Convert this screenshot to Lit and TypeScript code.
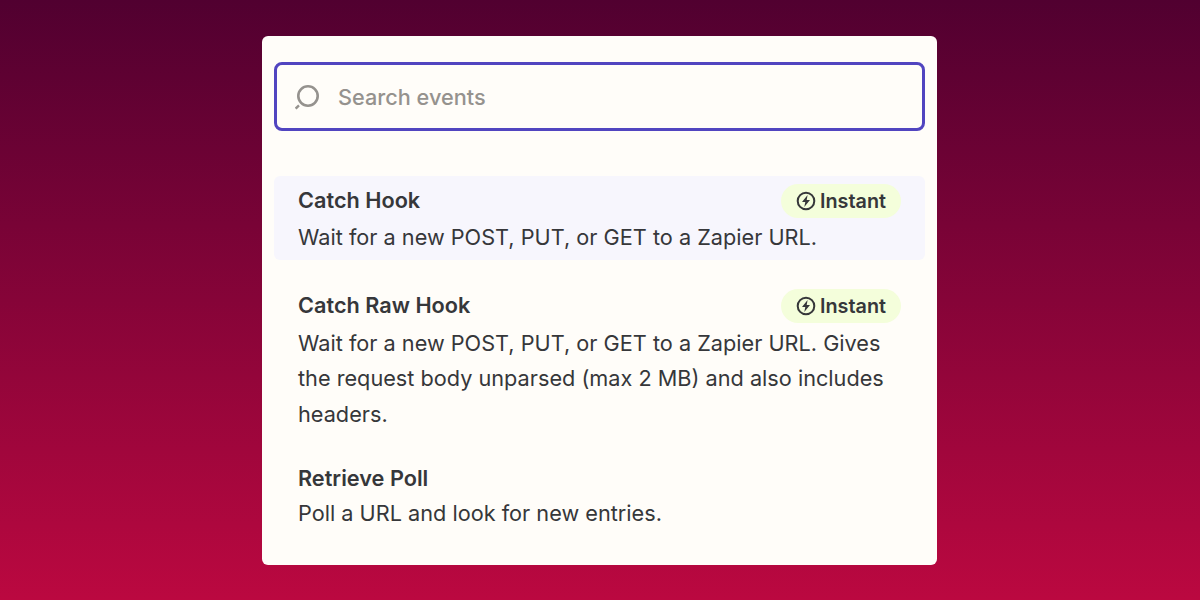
import { LitElement, html, css } from "lit";
import { customElement } from "lit/decorators.js";

const bolt = html`<svg class="bolt" viewBox="0 0 20 20" width="20" height="20" fill="none">
  <circle cx="10" cy="10" r="8.3" stroke="#36373a" stroke-width="2"></circle>
  <path d="M11.6 4 6 11h3.3l-1 5 5.7-7h-3.3z" fill="#36373a"></path>
</svg>`;

const events = [
  { title: "Catch Hook", desc: "Wait for a new POST, PUT, or GET to a Zapier URL.", instant: true, active: true },
  { title: "Catch Raw Hook", desc: "Wait for a new POST, PUT, or GET to a Zapier URL. Gives the request body unparsed (max 2 MB) and also includes headers.", instant: true, active: false },
  { title: "Retrieve Poll", desc: "Poll a URL and look for new entries.", instant: false, active: false },
];

@customElement("app-root")
export class AppRoot extends LitElement {
  static styles = css`
    :host {
      display: flex;
      align-items: flex-start;
      width: 1200px;
      height: 600px;
      box-sizing: border-box;
      padding: 36px 0 0 262px;
      overflow: hidden;
      background: linear-gradient(180deg, #510030 0%, #bb0840 100%);
      font-family: Inter, "Liberation Sans", sans-serif;
      color: #36373a;
    }
    .card {
      width: 675px;
      height: 529px;
      box-sizing: border-box;
      padding: 26px 12px 0;
      background: #fffdf9;
      border-radius: 6px;
    }
    .search {
      display: flex;
      align-items: center;
      gap: 17px;
      height: 69px;
      box-sizing: border-box;
      padding-left: 18px;
      border: 3px solid #5145c0;
      border-radius: 8px;
      font-size: 21.7px;
      font-weight: 500;
      color: #95928e;
    }
    .list {
      display: flex;
      flex-direction: column;
      margin-top: 45px;
    }
    .row {
      padding: 8px 24px 5px;
      border-radius: 6px;
    }
    .row.active {
      background: #f7f6fd;
    }
    .row + .row {
      margin-top: 21px;
    }
    .row + .row + .row {
      margin-top: 17px;
    }
    .head {
      display: flex;
      justify-content: space-between;
      align-items: flex-start;
      margin-bottom: 1.5px;
    }
    .row:nth-child(2) .head {
      margin-bottom: 2.5px;
    }
    .title {
      font-size: 21.7px;
      line-height: 32px;
      font-weight: 600;
    }
    .badge {
      display: flex;
      align-items: center;
      gap: 4px;
      height: 34px;
      padding: 0 15px;
      border-radius: 17px;
      background: #f4fedb;
      font-size: 19.8px;
      font-weight: 600;
    }
    .desc {
      font-size: 21.7px;
      line-height: 35.5px;
    }
  `;

  render() {
    return html`<div class="card">
      <div class="search">
        <svg viewBox="0 0 26 26" width="26" height="26" fill="none">
          <circle cx="13" cy="12" r="9.7" stroke="#95928e" stroke-width="2.6"></circle>
          <path d="M.7 24.6 4 21.4" stroke="#95928e" stroke-width="2.4"></path>
        </svg>
        <span>Search events</span>
      </div>
      <div class="list">
        ${events.map(
          (e) => html`<div class="row ${e.active ? "active" : ""}">
            <div class="head">
              <span class="title">${e.title}</span>
              ${e.instant ? html`<span class="badge">${bolt}Instant</span>` : ""}
            </div>
            <div class="desc">${e.desc}</div>
          </div>`
        )}
      </div>
    </div>`;
  }
}
